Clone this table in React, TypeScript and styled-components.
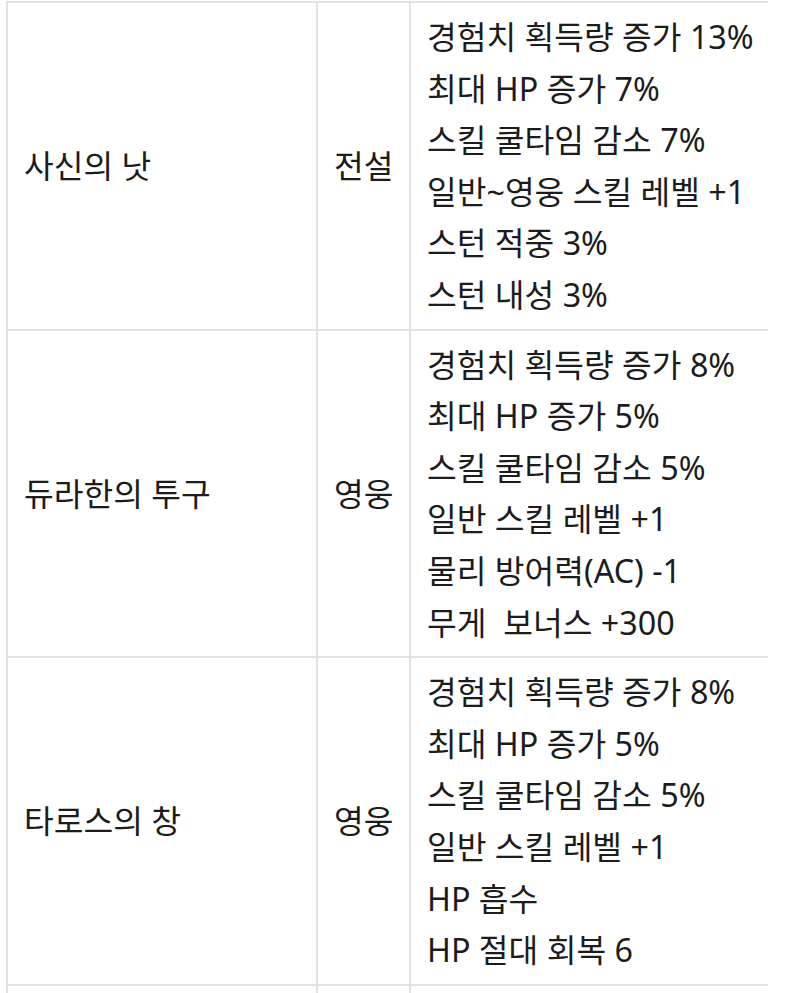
import React from 'react';
import styled, { createGlobalStyle } from 'styled-components';

interface Item {
	name: string;
	grade: string;
	options: string[];
}

const items: Item[] = [
	{
		name: '사신의 낫',
		grade: '전설',
		options: [
			'경험치 획득량 증가 13%',
			'최대 HP 증가 7%',
			'스킬 쿨타임 감소 7%',
			'일반~영웅 스킬 레벨 +1',
			'스턴 적중 3%',
			'스턴 내성 3%',
		],
	},
	{
		name: '듀라한의 투구',
		grade: '영웅',
		options: [
			'경험치 획득량 증가 8%',
			'최대 HP 증가 5%',
			'스킬 쿨타임 감소 5%',
			'일반 스킬 레벨 +1',
			'물리 방어력(AC) -1',
			'무게  보너스 +300',
		],
	},
	{
		name: '타로스의 창',
		grade: '영웅',
		options: [
			'경험치 획득량 증가 8%',
			'최대 HP 증가 5%',
			'스킬 쿨타임 감소 5%',
			'일반 스킬 레벨 +1',
			'HP 흡수',
			'HP 절대 회복 6',
		],
	},
];

const GlobalStyle = createGlobalStyle`
	body {
		margin: 0;
		background: #ffffff;
		font-family: 'Noto Sans', 'Noto Sans CJK KR', sans-serif;
		color: #1c1c1c;
	}
`;

const App: React.FC = (): JSX.Element => {
	return (
		<Page>
			<GlobalStyle />
			<TableWrapper>
				<Table>
					<colgroup>
						<col style={{ width: 310 }} />
						<col style={{ width: 93 }} />
						<col />
					</colgroup>
					<tbody>
						{items.map((item) => (
							<tr key={item.name}>
								<Cell>{item.name}</Cell>
								<Cell>{item.grade}</Cell>
								<Cell>
									{item.options.map((opt) => (
										<Option key={opt}>{opt}</Option>
									))}
								</Cell>
							</tr>
						))}
						<tr>
							<Cell $empty />
							<Cell $empty />
							<Cell $empty />
						</tr>
					</tbody>
				</Table>
			</TableWrapper>
		</Page>
	);
};

const Page = styled.div`
	padding: 1px 0 0 6px;
`;

const TableWrapper = styled.div`
	width: 762px;
	overflow: hidden;
`;

const Table = styled.table`
	width: 800px;
	table-layout: fixed;
	border-collapse: collapse;
	font-size: 32.3px;
	line-height: 51.6px;
`;

const Cell = styled.td<{ $empty?: boolean }>`
	border: 2px solid #e2e2e2;
	padding: 8px 16px;
	vertical-align: middle;
	white-space: nowrap;
	height: ${({ $empty }) => ($empty ? '60px' : 'auto')};
`;

const Option = styled.div`
	white-space: pre;
`;

export default App;
